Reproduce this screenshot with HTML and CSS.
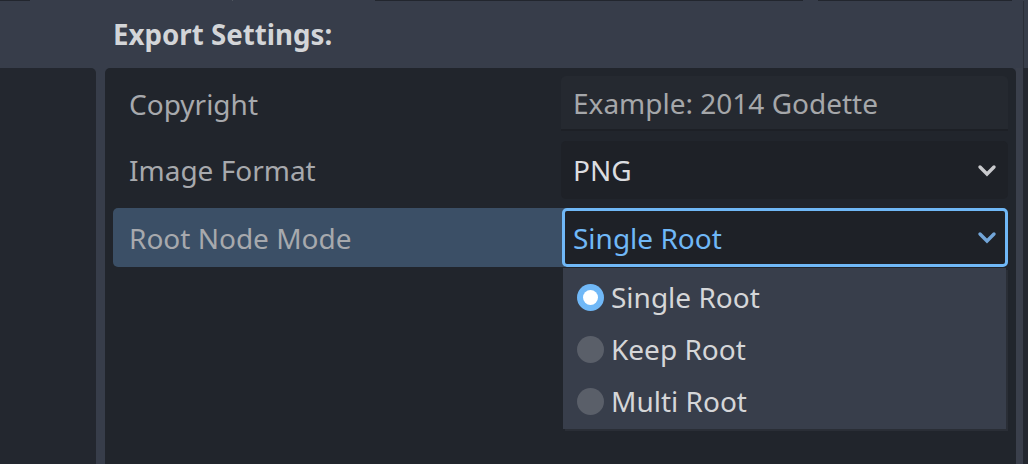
FILE: index.html
```html
<!DOCTYPE html>
<html>
<head>
<meta charset="utf-8">
<link rel="stylesheet" href="styles.css">
</head>
<body>
<div class="app">
  <div class="topline">
    <span class="seg s1"></span><span class="sp sp1"></span><span class="dot"></span><span class="sp sp2"></span><span class="seg s2"></span><span class="sp sp3"></span><span class="seg s3"></span>
  </div>
  <div class="header">
    <div class="heading">Export Settings:</div>
    <div class="hdr-edge"></div>
  </div>
  <div class="content">
    <div class="leftpanel"></div>
    <div class="mainpanel">
      <div class="prop row1">
        <div class="label">Copyright</div>
        <div class="lineedit">Example: 2014 Godette</div>
      </div>
      <div class="prop row2">
        <div class="label">Image Format</div>
        <div class="option">
          <span class="opt-text">PNG</span>
          <svg class="chev" width="20" height="13" viewBox="0 0 20 13"><polyline points="3,3 10,10 17,3" fill="none" stroke="#c9cacd" stroke-width="3.4" stroke-linejoin="miter" stroke-linecap="round"/></svg>
        </div>
      </div>
      <div class="prop row3">
        <div class="label label-hl">Root Node Mode</div>
        <div class="option option-focus">
          <span class="opt-text">Single Root</span>
          <svg class="chev" width="20" height="13" viewBox="0 0 20 13"><polyline points="3,3 10,10 17,3" fill="none" stroke="#72a5d8" stroke-width="3.4" stroke-linejoin="miter" stroke-linecap="round"/></svg>
          <div class="popup">
            <div class="item"><span class="radio radio-on"><span class="radio-dot"></span></span><span class="item-text">Single Root</span></div>
            <div class="item"><span class="radio"></span><span class="item-text">Keep Root</span></div>
            <div class="item"><span class="radio"></span><span class="item-text">Multi Root</span></div>
          </div>
        </div>
      </div>
    </div>
    <div class="rightgap"></div>
    <div class="edge"></div>
  </div>
</div>
</body>
</html>
```
FILE: styles.css
```css
html, body {
  margin: 0;
  padding: 0;
}
body {
  width: 1028px;
  height: 464px;
  overflow: hidden;
  background: #373d4a;
  font-family: "Noto Sans", "Open Sans", sans-serif;
}
.app {
  display: flex;
  flex-direction: column;
  height: 464px;
}
.topline {
  display: flex;
  height: 1px;
  flex: none;
}
.seg { display: block; height: 1px; background: #22262e; }
.s1 { width: 30px; }
.sp { display: block; }
.sp1 { width: 202px; }
.dot { display: block; width: 1px; height: 1px; background: #50565f; }
.sp2 { width: 142px; }
.s2 { width: 428px; }
.sp3 { width: 15px; }
.s3 { width: 194px; }

.header {
  display: flex;
  height: 67px;
  flex: none;
}
.heading {
  flex: 1;
  padding-left: 113px;
  padding-top: 15px;
  font-size: 27.7px;
  line-height: 36px;
  font-weight: bold;
  color: #d3d5d8;
}
.hdr-edge {
  width: 4px;
  border-left: 1px solid #2a2e37;
}

.content {
  flex: 1;
  display: flex;
  min-height: 0;
}
.leftpanel {
  width: 96px;
  background: #23272f;
  border-top-right-radius: 5px;
}
.mainpanel {
  width: 895px;
  margin-left: 9px;
  padding: 8px;
  background: #21252c;
  border-top-left-radius: 5px;
  border-top-right-radius: 5px;
}
.rightgap {
  width: 7px;
  background: #3a3f4b;
}
.edge {
  flex: 1;
  background: #23272f;
}

.prop {
  display: grid;
  grid-template-columns: 448px 447px;
  font-size: 28px;
}
.row1 { height: 55px; }
.row2 { height: 58px; margin-top: 10px; }
.row3 { height: 59px; margin-top: 9px; }

.label {
  display: flex;
  align-items: center;
  padding-left: 16px;
  color: #a7a9ad;
}
.label-hl {
  background: #3b4f66;
  border-radius: 5px 0 0 5px;
  margin-right: -4px;
}
.lineedit {
  display: flex;
  align-items: center;
  padding-left: 12px;
  background: #252930;
  border-bottom: 2px solid #1d2026;
  border-radius: 5px 5px 0 0;
  color: #a5a7aa;
}
.option {
  position: relative;
  display: flex;
  align-items: center;
  justify-content: space-between;
  padding: 0 11px 0 12px;
  background: #1e2127;
  border-radius: 5px;
  color: #dcdde0;
}
.option-focus {
  border: 3px solid #70b8f7;
  padding: 0 8px 0 8px;
  margin-left: 1px;
  color: #70b8f7;
}
.chev { display: block; }

.popup {
  position: absolute;
  top: calc(100% + 4px);
  left: -2px;
  right: -1px;
  padding: 3px 0 2px;
  background: #383e4b;
  box-shadow: 2px 2px 0 #2a2e36;
}
.item {
  display: flex;
  align-items: center;
  height: 52px;
  padding-left: 14px;
}
.radio {
  width: 27px;
  height: 27px;
  border-radius: 50%;
  background: #5a5f69;
  display: flex;
  align-items: center;
  justify-content: center;
}
.radio-on { background: #70b8f7; }
.radio-dot {
  width: 15px;
  height: 15px;
  border-radius: 50%;
  background: #ffffff;
}
.item-text {
  margin-left: 7px;
  color: #d5d6d8;
}
```
